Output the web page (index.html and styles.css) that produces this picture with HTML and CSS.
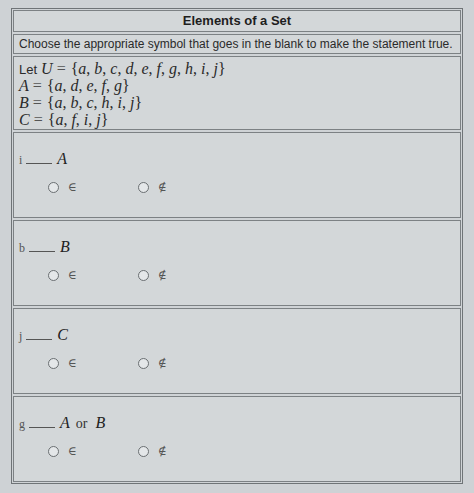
FILE: index.html
```html
<!DOCTYPE html>
<html>
<head>
<meta charset="utf-8">
<link rel="stylesheet" href="styles.css">
</head>
<body>
<div class="sheet">
  <div class="cell title">Elements of a Set</div>
  <div class="cell instr">Choose the appropriate symbol that goes in the blank to make the statement true.</div>
  <div class="cell sets">
    <div class="mline"><span class="txt">Let</span> <i>U</i><span class="op">=</span>{<i>a</i>, <i>b</i>, <i>c</i>, <i>d</i>, <i>e</i>, <i>f</i>, <i>g</i>, <i>h</i>, <i>i</i>, <i>j</i>}</div>
    <div class="mline"><i>A</i><span class="op">=</span>{<i>a</i>, <i>d</i>, <i>e</i>, <i>f</i>, <i>g</i>}</div>
    <div class="mline"><i>B</i><span class="op">=</span>{<i>a</i>, <i>b</i>, <i>c</i>, <i>h</i>, <i>i</i>, <i>j</i>}</div>
    <div class="mline"><i>C</i><span class="op">=</span>{<i>a</i>, <i>f</i>, <i>i</i>, <i>j</i>}</div>
  </div>
  <div class="cell q">
    <div class="qline"><span class="el">i</span><span class="blank"></span><i class="set">A</i></div>
    <div class="opts">
      <label class="opt"><span class="radio"></span><span class="sym">∈</span></label>
      <label class="opt"><span class="radio"></span><span class="sym">∉</span></label>
    </div>
  </div>
  <div class="cell q">
    <div class="qline"><span class="el">b</span><span class="blank"></span><i class="set">B</i></div>
    <div class="opts">
      <label class="opt"><span class="radio"></span><span class="sym">∈</span></label>
      <label class="opt"><span class="radio"></span><span class="sym">∉</span></label>
    </div>
  </div>
  <div class="cell q">
    <div class="qline"><span class="el">j</span><span class="blank"></span><i class="set">C</i></div>
    <div class="opts">
      <label class="opt"><span class="radio"></span><span class="sym">∈</span></label>
      <label class="opt"><span class="radio"></span><span class="sym">∉</span></label>
    </div>
  </div>
  <div class="cell q">
    <div class="qline"><span class="el">g</span><span class="blank"></span><i class="set">A</i><span class="or">or</span><i class="set">B</i></div>
    <div class="opts">
      <label class="opt"><span class="radio"></span><span class="sym">∈</span></label>
      <label class="opt"><span class="radio"></span><span class="sym">∉</span></label>
    </div>
  </div>
</div>
</body>
</html>
```
FILE: styles.css
```css
html, body {
  margin: 0;
  padding: 0;
}
body {
  background: #ced2d5;
  font-family: "Liberation Sans", Arial, sans-serif;
  color: #222;
  width: 474px;
  height: 493px;
  overflow: hidden;
}
.sheet {
  margin: 8px 11px 0 11px;
  border: 1px solid #6f7477;
  padding: 1px;
  display: flex;
  flex-direction: column;
  gap: 2px;
  background: #cfd3d6;
}
.cell {
  border: 1px solid #7c8184;
  background: #d3d7d9;
}
.title {
  height: 20px;
  line-height: 20px;
  text-align: center;
  font-weight: bold;
  font-size: 13px;
  color: #1e1e1e;
}
.instr {
  height: 18px;
  line-height: 18px;
  padding-left: 5px;
  font-size: 12px;
  color: #2a2a2a;
  white-space: nowrap;
  overflow: hidden;
}
.sets {
  padding: 3px 0 0 5px;
  box-sizing: border-box;
  height: 74px;
  font-family: "Liberation Serif", "Times New Roman", serif;
  font-size: 16px;
  color: #2a2a2a;
}
.mline {
  height: 17px;
  line-height: 17px;
  white-space: nowrap;
}
.mline i {
  font-style: italic;
}
.txt {
  font-family: "Liberation Sans", Arial, sans-serif;
  font-size: 13px;
}
.op {
  color: #555;
  margin: 0 5px 0 4px;
}
.q {
  height: 86px;
  box-sizing: border-box;
  padding: 17px 0 0 5px;
  display: flex;
  flex-direction: column;
  gap: 14px;
}
.qline {
  height: 16px;
  display: flex;
  align-items: baseline;
  font-family: "Liberation Serif", "Times New Roman", serif;
  font-size: 13px;
  color: #333;
}
.el {
  color: #555;
  font-size: 12px;
}
.blank {
  display: inline-block;
  width: 26px;
  border-bottom: 1px solid #555;
  margin: 0 5px 0 4px;
  height: 1px;
}
.set {
  font-size: 16px;
  color: #222;
}
.or {
  font-size: 14px;
  margin: 0 8px 0 6px;
}
.opts {
  display: flex;
  padding-left: 29px;
}
.opt {
  width: 90px;
  display: flex;
  align-items: center;
  gap: 9px;
}
.radio {
  width: 9px;
  height: 9px;
  border: 1px solid #6a6f72;
  border-radius: 50%;
  background: #e4e7e9;
}
.sym {
  font-family: "DejaVu Serif", serif;
  font-size: 12px;
  color: #555;
}
```
